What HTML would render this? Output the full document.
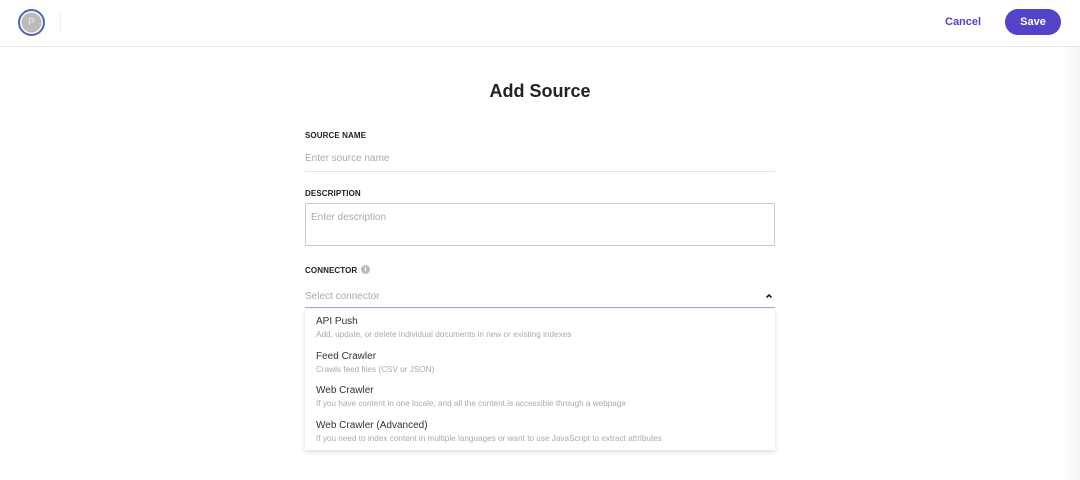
<!DOCTYPE html><html><head><style>
body{margin:0;width:1080px;height:480px;background:#fff;font-family:"Liberation Sans",sans-serif;position:relative;overflow:hidden}
.a{position:absolute}
.lbl{position:absolute;left:305px;font-size:8px;font-weight:bold;color:#222;letter-spacing:.1px}
.ph{position:absolute;font-size:10px;color:#aaa}
.t{position:absolute;left:316px;font-size:10px;color:#333}
.d{position:absolute;left:316px;font-size:8.2px;color:#aaa}
</style></head><body>
<div class="a" style="left:0;top:0;width:1080px;height:46px;border-bottom:1px solid #e6e6e6"></div>
<div class="a" style="left:18px;top:9px;width:23px;height:23px;border:2px solid #5665b0;border-radius:50%;background:#bbb;box-shadow:inset 0 0 0 1.5px #fff;color:#eee;font-size:10px;text-align:center;line-height:23px">P</div>
<div class="a" style="left:60px;top:13px;width:1px;height:20px;background:#eee"></div>
<div class="a" style="left:945px;top:16px;font-size:11px;font-weight:bold;color:#5243c9">Cancel</div>
<div class="a" style="left:1005px;top:9px;width:56px;height:26px;border-radius:13px;background:#5243c9;color:#fff;font-size:11px;font-weight:bold;text-align:center;line-height:27px">Save</div>
<div class="a" style="left:1060px;top:47px;width:20px;height:433px;background:linear-gradient(90deg,rgba(0,0,0,0),rgba(0,0,0,.04))"></div>
<div class="a" style="left:0;width:1080px;top:81px;text-align:center;font-size:18px;font-weight:bold;color:#222">Add Source</div>
<div class="lbl" style="top:131px">SOURCE NAME</div>
<div class="ph" style="left:305px;top:153px">Enter source name</div>
<div class="a" style="left:305px;top:171px;width:470px;height:1px;background:#e3e3e3"></div>
<div class="lbl" style="top:189px">DESCRIPTION</div>
<div class="a" style="left:305px;top:203px;width:468px;height:41px;border:1px solid #ccc;border-radius:2px"></div>
<div class="ph" style="left:311px;top:212px">Enter description</div>
<div class="lbl" style="top:266px">CONNECTOR</div>
<div class="a" style="left:361px;top:265px;width:9px;height:9px;border-radius:50%;background:#bbb;color:#fff;font-size:7px;text-align:center;line-height:9px;font-weight:bold">i</div>
<div class="ph" style="left:305px;top:291px">Select connector</div>
<svg class="a" style="left:765px;top:292px" width="8" height="8"><path d="M1.5 5.5L4 3 6.5 5.5" stroke="#222" stroke-width="1.6" fill="none"/></svg>
<div class="a" style="left:305px;top:307px;width:470px;height:1px;background:#a99ee6"></div>
<div class="a" style="left:305px;top:309px;width:470px;height:141px;background:#fff;box-shadow:0 2px 5px rgba(0,0,0,.15)"></div>
<div class="t" style="top:316px">API Push</div><div class="d" style="top:330px">Add, update, or delete individual documents in new or existing indexes</div>
<div class="t" style="top:351px">Feed Crawler</div><div class="d" style="top:365px">Crawls feed files (CSV or JSON)</div>
<div class="t" style="top:385px">Web Crawler</div><div class="d" style="top:399px">If you have content in one locale, and all the content is accessible through a webpage</div>
<div class="t" style="top:420px">Web Crawler (Advanced)</div><div class="d" style="top:434px">If you need to index content in multiple languages or want to use JavaScript to extract attributes</div>
</body></html>
